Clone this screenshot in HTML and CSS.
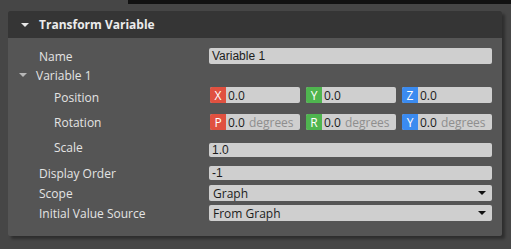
FILE: index.html
```html
<!DOCTYPE html>
<html>
<head>
<meta charset="utf-8">
<link rel="stylesheet" href="styles.css">
</head>
<body>
<div class="topbar"></div>
<div class="panel">
  <div class="header">
    <span class="tri tri-light"></span>
    <span class="title">Transform Variable</span>
  </div>
  <div class="body">
    <div class="row r-name">
      <div class="label">Name</div>
      <div class="field text arial">Variable 1</div>
    </div>
    <div class="row r-var">
      <span class="tri tri-dim"></span>
      <div class="label sub">Variable 1</div>
    </div>
    <div class="row r-pos">
      <div class="label indent up">Position</div>
      <div class="vec">
        <div class="vfield"><span class="badge red">X</span><span class="val">0.0</span></div>
        <div class="vfield"><span class="badge green">Y</span><span class="val">0.0</span></div>
        <div class="vfield"><span class="badge blue">Z</span><span class="val">0.0</span></div>
      </div>
    </div>
    <div class="row r-rot">
      <div class="label indent">Rotation</div>
      <div class="vec">
        <div class="vfield"><span class="badge red">P</span><span class="val">0.0</span><span class="unit">degrees</span></div>
        <div class="vfield"><span class="badge green">R</span><span class="val">0.0</span><span class="unit">degrees</span></div>
        <div class="vfield"><span class="badge blue">Y</span><span class="val">0.0</span><span class="unit">degrees</span></div>
      </div>
    </div>
    <div class="row r-scale">
      <div class="label indent down">Scale</div>
      <div class="field text arial short">1.0</div>
    </div>
    <div class="row r-order">
      <div class="label">Display Order</div>
      <div class="field text arial short">-1</div>
    </div>
    <div class="row r-scope">
      <div class="label">Scope</div>
      <div class="field select"><span>Graph</span><span class="arrow"></span></div>
    </div>
    <div class="row r-src">
      <div class="label">Initial Value Source</div>
      <div class="field select"><span>From Graph</span><span class="arrow"></span></div>
    </div>
  </div>
</div>
</body>
</html>
```
FILE: styles.css
```css
html, body {
  margin: 0;
  padding: 0;
}
body {
  width: 511px;
  height: 249px;
  background: #464646;
  font-family: "Open Sans", "Noto Sans", sans-serif;
  overflow: hidden;
}
.topbar {
  margin-left: 128px;
  height: 4px;
  background: #121212;
}
.panel {
  margin: 7px 0 0 8px;
  width: 494px;
  background: #555555;
  border-radius: 2px;
  box-shadow: 3px 3px 3px rgba(0, 0, 0, 0.35);
  overflow: hidden;
}
.header {
  height: 27px;
  background: #353535;
  display: flex;
  align-items: center;
}
.tri {
  width: 0;
  height: 0;
  border-left: 4px solid transparent;
  border-right: 4px solid transparent;
}
.tri-light {
  margin-left: 13px;
  border-top: 4px solid #e8e8e8;
}
.tri-dim {
  margin-left: 11px;
  border-top: 4px solid #b8b8b8;
}
.title {
  margin-left: 10px;
  color: #ececec;
  font-weight: bold;
  font-size: 12px;
}
.body {
  padding: 10px 0 15px 0;
}
.row {
  display: flex;
  align-items: center;
  height: 16px;
}
.r-var { margin-top: 3px; }
.r-pos { margin-top: 4px; }
.r-rot { margin-top: 11px; }
.r-scale { margin-top: 13px; height: 14px; }
.r-order { margin-top: 9px; height: 14px; }
.r-scope { margin-top: 5px; }
.r-src { margin-top: 4px; }
.label {
  width: 170px;
  padding-left: 31px;
  color: #e4e4e4;
  font-size: 12px;
  flex: none;
}
.label.indent {
  padding-left: 46px;
  width: 155px;
}
.label.up {
  margin-top: 5px;
}
.label.down {
  margin-top: -5px;
}
.label.sub {
  padding-left: 9px;
}
.field {
  width: 283px;
  height: 16px;
  background: #cfcfcf;
  border-radius: 2px;
  color: #1c1c1c;
  font-size: 12px;
  box-sizing: border-box;
  padding-left: 3px;
  display: flex;
  align-items: center;
}
.field.short {
  height: 14px;
}
.arial {
  font-family: "Liberation Sans", Arial, sans-serif;
}
.select {
  justify-content: space-between;
  padding-left: 4px;
  padding-right: 6px;
}
.arrow {
  width: 0;
  height: 0;
  border-left: 4px solid transparent;
  border-right: 4px solid transparent;
  border-top: 4px solid #111;
}
.vec {
  display: flex;
  gap: 6px;
  margin-left: 1px;
}
.vfield {
  width: 90px;
  height: 16px;
  background: #cfcfcf;
  border-radius: 2px;
  display: flex;
  align-items: center;
  overflow: hidden;
  font-size: 12px;
}
.badge {
  width: 16px;
  height: 16px;
  display: flex;
  align-items: center;
  justify-content: center;
  color: #ffffff;
  font-size: 12px;
}
.red { background: #e05140; }
.green { background: #4fb54f; }
.blue { background: #3b8bf0; }
.val {
  margin-left: 2px;
  color: #1c1c1c;
}
.unit {
  margin-left: 4px;
  color: #8e8e8e;
}
```
